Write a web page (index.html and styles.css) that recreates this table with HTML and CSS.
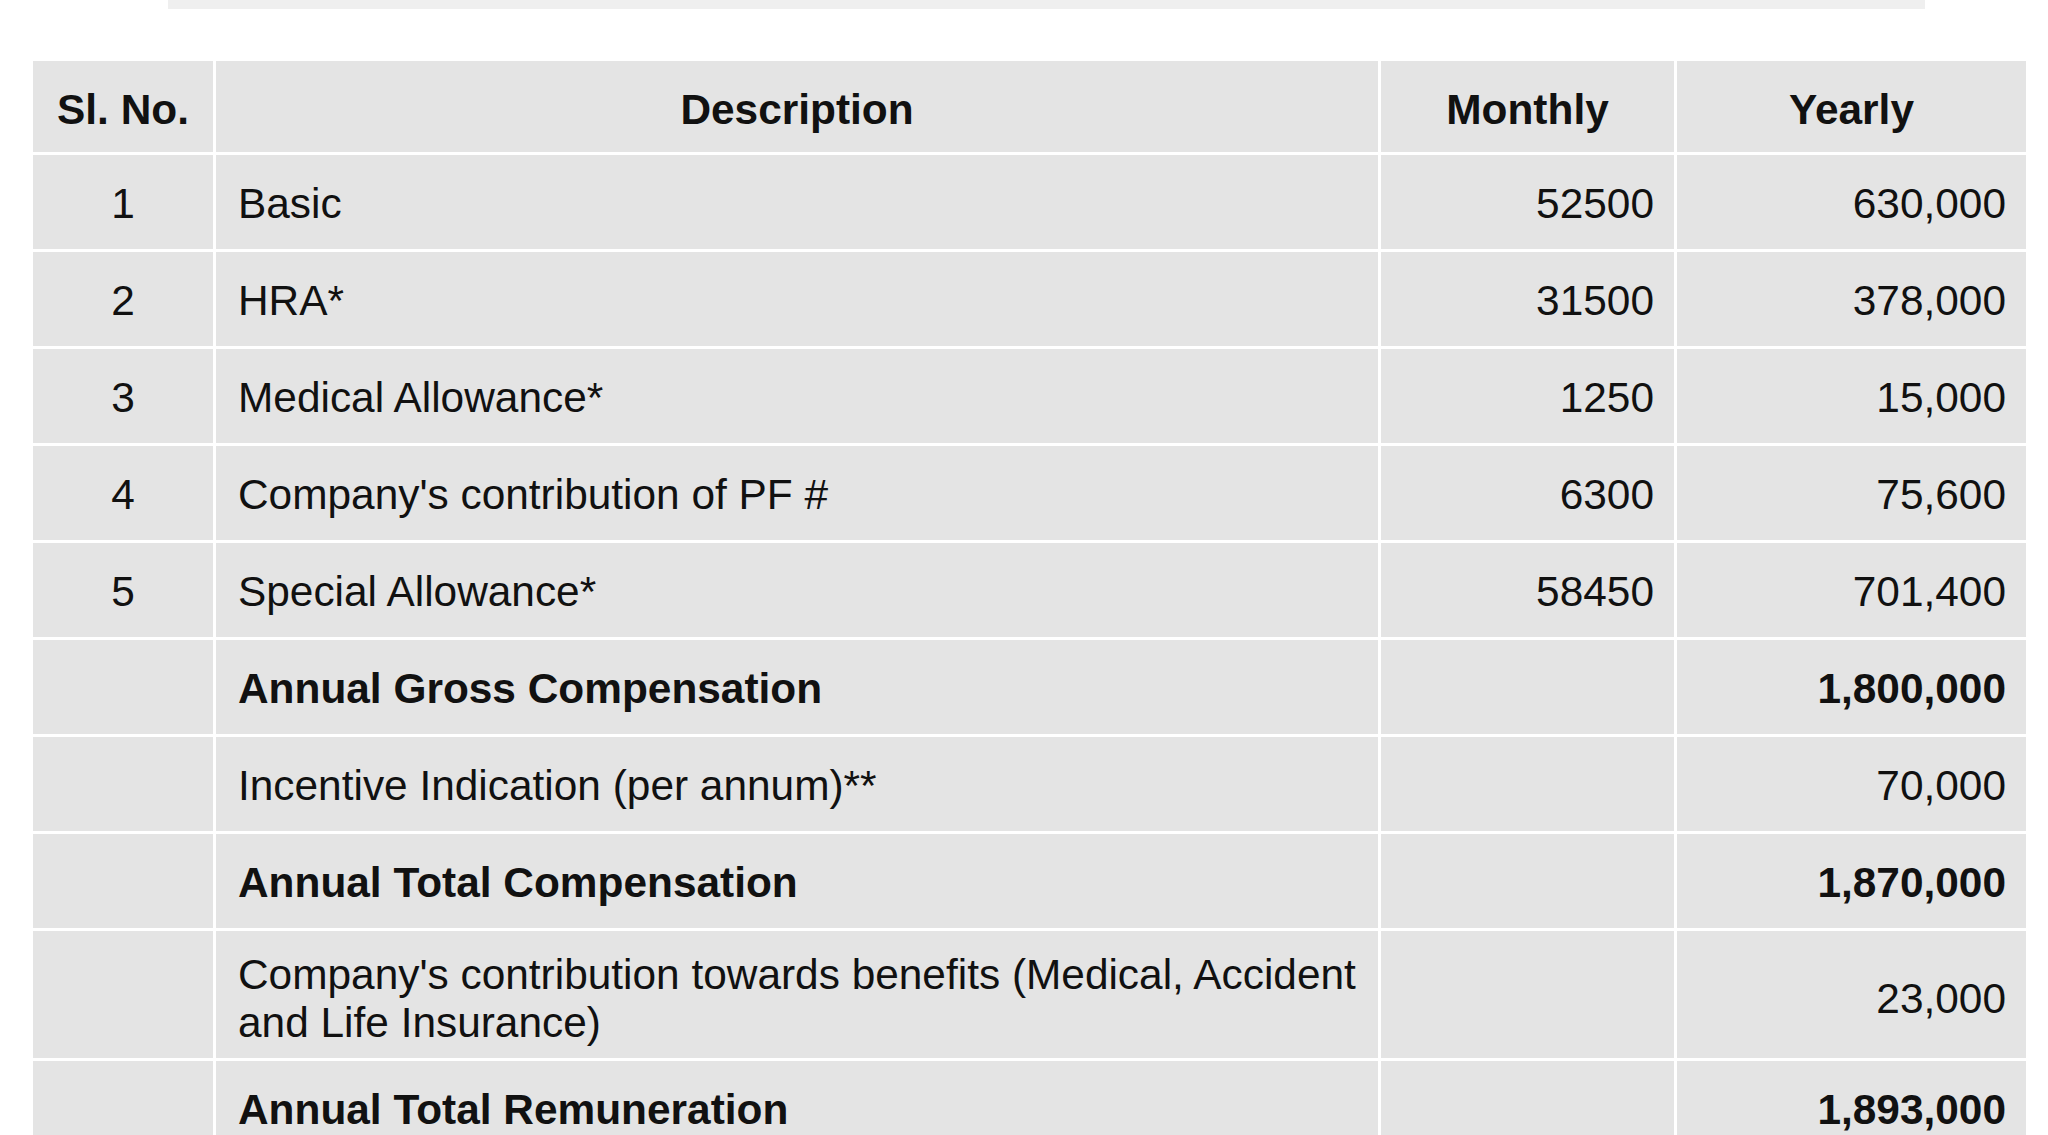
FILE: index.html
```html
<!DOCTYPE html>
<html>
<head>
<meta charset="utf-8">
<link rel="stylesheet" href="styles.css">
</head>
<body>
<div class="topbar"></div>
<table class="comp">
  <colgroup>
    <col class="c1"><col class="c2"><col class="c3"><col class="c4">
  </colgroup>
  <thead>
    <tr>
      <th>Sl. No.</th>
      <th>Description</th>
      <th>Monthly</th>
      <th>Yearly</th>
    </tr>
  </thead>
  <tbody>
    <tr><td class="no">1</td><td>Basic</td><td class="num">52500</td><td class="num">630,000</td></tr>
    <tr><td class="no">2</td><td>HRA*</td><td class="num">31500</td><td class="num">378,000</td></tr>
    <tr><td class="no">3</td><td>Medical Allowance*</td><td class="num">1250</td><td class="num">15,000</td></tr>
    <tr><td class="no">4</td><td>Company's contribution of PF #</td><td class="num">6300</td><td class="num">75,600</td></tr>
    <tr><td class="no">5</td><td>Special Allowance*</td><td class="num">58450</td><td class="num">701,400</td></tr>
    <tr class="bold"><td class="no"></td><td>Annual Gross Compensation</td><td class="num"></td><td class="num">1,800,000</td></tr>
    <tr><td class="no"></td><td>Incentive Indication (per annum)**</td><td class="num"></td><td class="num">70,000</td></tr>
    <tr class="bold"><td class="no"></td><td>Annual Total Compensation</td><td class="num"></td><td class="num">1,870,000</td></tr>
    <tr class="tall"><td class="no"></td><td>Company's contribution towards benefits (Medical, Accident and Life Insurance)</td><td class="num"></td><td class="num">23,000</td></tr>
    <tr class="bold"><td class="no"></td><td>Annual Total Remuneration</td><td class="num"></td><td class="num">1,893,000</td></tr>
  </tbody>
</table>
</body>
</html>
```
FILE: styles.css
```css
html, body {
  margin: 0;
  padding: 0;
  background: #ffffff;
  overflow: hidden;
}
body {
  font-family: "Liberation Sans", Arial, sans-serif;
  color: #111111;
}
.topbar {
  margin-left: 168px;
  width: 1757px;
  height: 9px;
  background: #efefef;
}
.comp {
  margin: 49px 0 0 30px;
  width: 1999px;
  table-layout: fixed;
  border-collapse: separate;
  border-spacing: 3px;
  font-size: 42.4px;
}
.c1 { width: 180px; }
.c2 { width: 1162px; }
.c3 { width: 293px; }
.c4 { width: 349px; }
.comp th,
.comp td {
  background: #e4e4e4;
  padding: 4px 22px 0 22px;
  line-height: 48px;
  vertical-align: middle;
}
.comp th {
  padding-top: 7px;
  height: 84px;
  font-weight: bold;
  text-align: center;
}
.comp td {
  height: 90px;
  text-align: left;
}
.comp td.no { text-align: center; }
.comp td.num { text-align: right; padding-right: 20px; }
.comp tr.bold td { font-weight: bold; }
.comp tr.tall td { padding-top: 20px; padding-bottom: 11px; }
```
